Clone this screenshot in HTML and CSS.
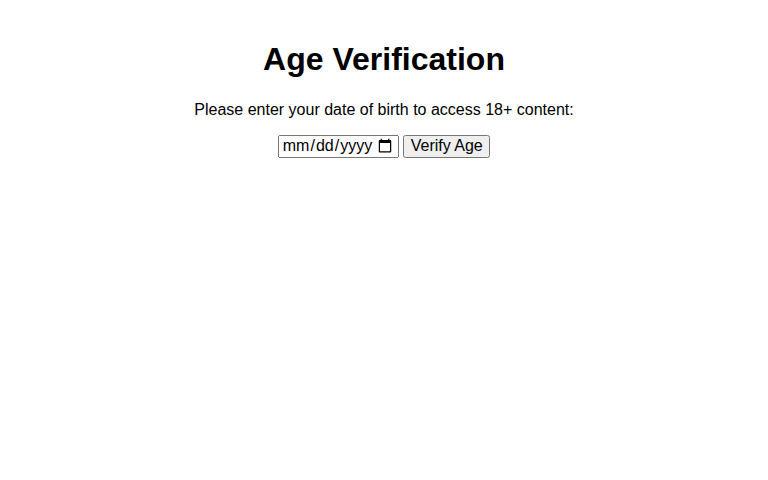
FILE: index.html
```html
<!DOCTYPE html>
<html lang="en">
<head>
  <meta charset="UTF-8" />
  <title>Age Verification</title>
  <meta name="viewport" content="width=device-width, initial-scale=1" />
  <link rel="stylesheet" href="styles.css">
</head>
<body>
  <div class="container">
    <h1>Age Verification</h1>
    <p>Please enter your date of birth to access 18+ content:</p>
    <form class="verify-form" id="verifyForm">
      <input type="date" id="dob" required />
      <button type="submit">Verify Age</button>
    </form>
    <div id="result"></div>
  </div>
</body>
</html>
```
FILE: styles.css
```css
body {
  font-family: Arial, 'Liberation Sans', sans-serif;
  text-align: center;
  margin: 0;
  padding: 20px;
}
.container {
  margin-top: 20px;
}
h1 {
  margin: 21px 0 22.5px;
}
p {
  margin: 0 0 16px;
}
.verify-form input,
.verify-form button {
  font-family: Arial, 'Liberation Sans', sans-serif;
  font-size: 16px;
  height: 23px;
  box-sizing: border-box;
  vertical-align: middle;
}
.verify-form input {
  width: 121px;
  padding: 1px 2px;
}
.verify-form button {
  width: 87px;
  padding: 0 4px;
  white-space: nowrap;
}
```
